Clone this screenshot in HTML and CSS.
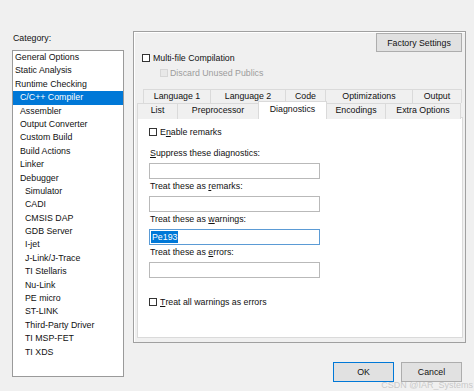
FILE: index.html
```html
<!DOCTYPE html>
<html lang="en">
<head>
    <meta charset="UTF-8">
    <meta name="viewport" content="width=device-width, initial-scale=1.0">
    <link rel="stylesheet" href="styles.css">
</head>
<body>
    <div id="dialog">
        <div id="category">
            <div class="category-label">Category:</div>
            <ul id="listbox">
                <li class="lvl0">General Options</li>
                <li class="lvl0">Static Analysis</li>
                <li class="lvl0">Runtime Checking</li>
                <li class="lvl1 selected">C/C++ Compiler</li>
                <li class="lvl1">Assembler</li>
                <li class="lvl1">Output Converter</li>
                <li class="lvl1">Custom Build</li>
                <li class="lvl1">Build Actions</li>
                <li class="lvl1">Linker</li>
                <li class="lvl1">Debugger</li>
                <li class="lvl2">Simulator</li>
                <li class="lvl2">CADI</li>
                <li class="lvl2">CMSIS DAP</li>
                <li class="lvl2">GDB Server</li>
                <li class="lvl2">I-jet</li>
                <li class="lvl2">J-Link/J-Trace</li>
                <li class="lvl2">TI Stellaris</li>
                <li class="lvl2">Nu-Link</li>
                <li class="lvl2">PE micro</li>
                <li class="lvl2">ST-LINK</li>
                <li class="lvl2">Third-Party Driver</li>
                <li class="lvl2">TI MSP-FET</li>
                <li class="lvl2">TI XDS</li>
            </ul>
        </div>

        <div id="right">
            <div id="panel">
                <div class="factory-row">
                    <button class="btn factory">Factory Settings</button>
                </div>
                <div class="check-row multi"><span class="box"></span>Multi-file Compilation</div>
                <div class="check-row discard"><span class="box"></span>Discard Unused Publics</div>

                <div id="tabs">
                    <div class="tab-row row1">
                        <div class="tab">Language 1</div>
                        <div class="tab">Language 2</div>
                        <div class="tab">Code</div>
                        <div class="tab">Optimizations</div>
                        <div class="tab">Output</div>
                    </div>
                    <div class="tab-row row2">
                        <div class="tab">List</div>
                        <div class="tab">Preprocessor</div>
                        <div class="tab active">Diagnostics</div>
                        <div class="tab">Encodings</div>
                        <div class="tab">Extra Options</div>
                    </div>
                </div>

                <div id="page">
                    <div class="check-row enable"><span class="box"></span>E<u>n</u>able remarks</div>

                    <div class="field first">
                        <div class="field-label"><u>S</u>uppress these diagnostics:</div>
                        <div class="textbox"></div>
                    </div>
                    <div class="field">
                        <div class="field-label">Treat these as <u>r</u>emarks:</div>
                        <div class="textbox"></div>
                    </div>
                    <div class="field">
                        <div class="field-label">Treat these as <u>w</u>arnings:</div>
                        <div class="textbox focused"><span class="sel">Pe193</span></div>
                    </div>
                    <div class="field">
                        <div class="field-label">Treat these as <u>e</u>rrors:</div>
                        <div class="textbox"></div>
                    </div>

                    <div class="check-row treat-all"><span class="box"></span><u>T</u>reat all warnings as errors</div>
                </div>
            </div>

            <div id="buttons">
                <button class="btn ok">OK</button>
                <button class="btn">Cancel</button>
            </div>
        </div>
    </div>

    <div class="watermark">CSDN @IAR_Systems</div>
</body>
</html>
```

FILE: styles.css
```css
body {
    margin: 0;
    background-color: #f0f0f0;
    font-family: "Liberation Sans", Arial, sans-serif;
    font-size: 8.8px;
    color: #111;
    width: 474px;
    height: 391px;
    overflow: hidden;
    position: relative;
}

#dialog {
    display: flex;
    align-items: flex-start;
    padding: 31px 0 0 12px;
}

/* left side: category list */

#category {
    width: 112px;
    padding-top: 1px;
}

.category-label {
    height: 12px;
    line-height: 12px;
    margin-left: 1px;
    margin-bottom: 6px;
}

#listbox {
    list-style: none;
    margin: 0;
    padding: 0;
    height: 327px;
    box-sizing: border-box;
    background-color: #fff;
    border: 1px solid #9a9a9a;
}

#listbox li {
    height: 13.4px;
    line-height: 13.4px;
    white-space: nowrap;
}

.lvl0 {
    padding-left: 2px;
}

.lvl1 {
    padding-left: 7px;
}

.lvl2 {
    padding-left: 12px;
}

#listbox li.selected {
    background-color: #0078d7;
    color: #fff;
}

/* right side */

#right {
    margin-left: 9px;
    width: 333px;
}

#panel {
    height: 312px;
    box-sizing: border-box;
    border: 1px solid #a0a0a0;
    box-shadow: inset 1px 1px 0 #fff;
    padding: 0 2px 4px 3px;
}

.btn {
    font-family: inherit;
    font-size: 8.8px;
    color: #111;
    background-color: #e1e1e1;
    border: 1px solid #adadad;
    padding: 0;
    height: 20px;
    box-sizing: border-box;
}

.factory-row {
    height: 20px;
    display: flex;
    justify-content: flex-end;
    align-items: flex-start;
    padding-right: 1px;
}

.btn.factory {
    width: 86px;
    height: 19px;
    margin-top: 1px;
}

.check-row {
    display: flex;
    align-items: center;
    height: 12px;
    white-space: nowrap;
}

.box {
    width: 8px;
    height: 8px;
    box-sizing: border-box;
    border: 1px solid #333;
    background-color: #fff;
    margin-right: 3px;
}

.multi {
    padding-left: 5px;
}

.discard {
    margin-top: 3px;
    padding-left: 23px;
    color: #9c9c9c;
}

.discard .box {
    border-color: #d6d6d6;
    background-color: #e8e8e8;
    margin-right: 2px;
}

/* tabs */

#tabs {
    margin-top: 10px;
}

.tab-row {
    display: grid;
    height: 14px;
}

.row1 {
    grid-template-columns: 67px 75px 40px 87px 50px;
    padding-left: 6px;
}

.row2 {
    grid-template-columns: 40px 81px 69px 58px 76px;
}

.tab {
    border: 1px solid #dadada;
    border-bottom: none;
    border-right: none;
    background-color: #f0f0f0;
    text-align: center;
    line-height: 13px;
    white-space: nowrap;
}

.tab:last-child {
    border-right: 1px solid #dadada;
}

.tab.active {
    background-color: #fff;
    border-right: 1px solid #dadada;
    margin-top: -2px;
    height: 17px;
    line-height: 14px;
    position: relative;
    z-index: 1;
}

.tab.active + .tab {
    border-left: none;
}

#page {
    height: 221px;
    box-sizing: border-box;
    background-color: #fff;
    border: 1px solid #dadada;
    padding: 8px 0 0 11px;
}

.field {
    margin-top: 1px;
}

.field.first {
    margin-top: 9px;
}

.field-label {
    height: 12px;
    line-height: 12px;
    margin-left: 1px;
    margin-bottom: 4px;
}

.textbox {
    width: 171px;
    height: 16px;
    box-sizing: border-box;
    border: 1px solid #b9b9b9;
    background-color: #fff;
    display: flex;
    align-items: center;
}

.textbox.focused {
    border-color: #5b9bd5;
}

.sel {
    background-color: #0078d7;
    color: #fff;
    margin-left: 1px;
    padding: 0 1px;
    line-height: 12px;
}

.treat-all {
    margin-top: 18px;
}

u {
    text-decoration-thickness: 1px;
    text-underline-offset: 1px;
}

/* bottom buttons */

#buttons {
    display: flex;
    justify-content: flex-end;
    gap: 7px;
    margin-top: 19px;
    padding-right: 4px;
}

#buttons .btn {
    width: 61px;
}

.btn.ok {
    border-color: #0078d7;
}

.watermark {
    position: absolute;
    right: 1px;
    bottom: 1px;
    font-size: 9px;
    color: rgba(190, 190, 190, 0.8);
    white-space: nowrap;
}
```
